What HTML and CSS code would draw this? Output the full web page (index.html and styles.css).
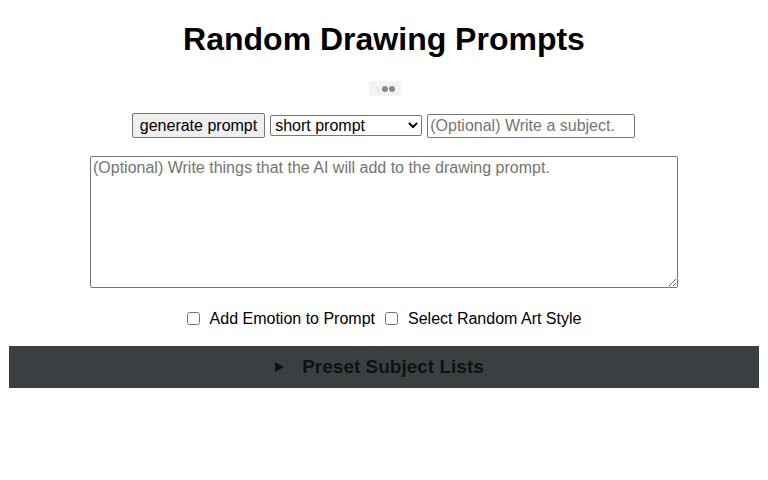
FILE: index.html
```html
<!DOCTYPE html>
<html>
<head>
<meta charset="utf-8">
<link rel="stylesheet" href="styles.css">
</head>
<body>
<h1 class="title">Random Drawing Prompts</h1>
<div class="loader-row">
  <div class="loader"><span class="dot faint"></span><span class="dot"></span><span class="dot"></span></div>
</div>
<div class="controls">
  <button class="btn">generate prompt</button>
  <select class="sel"><option>short prompt</option></select>
  <input class="subject" type="text" placeholder="(Optional) Write a subject.">
</div>
<div class="area-row">
  <textarea class="extras" placeholder="(Optional) Write things that the AI will add to the drawing prompt."></textarea>
</div>
<div class="checks">
  <label class="check"><input type="checkbox"> Add Emotion to Prompt</label>
  <label class="check"><input type="checkbox"> Select Random Art Style</label>
</div>
<details class="presets">
  <summary class="presets-sum">Preset Subject Lists</summary>
</details>
</body>
</html>
```
FILE: styles.css
```css
body {
  margin: 8px;
  font-family: "Liberation Sans", Arial, sans-serif;
  background: #fff;
  color: #000;
}
.title {
  text-align: center;
  font-size: 32px;
  margin: 13px 0 23px;
}
.loader-row {
  display: flex;
  justify-content: center;
}
.loader {
  width: 32px;
  height: 15px;
  background: #f3f3f3;
  border-radius: 3px;
  display: flex;
  align-items: center;
  justify-content: center;
  gap: 1px;
  margin-left: 2px;
}
.dot {
  width: 6px;
  height: 6px;
  border-radius: 50%;
  background: #8a8a8a;
}
.dot.faint {
  background: #ececec;
}
.controls {
  display: flex;
  justify-content: center;
  align-items: center;
  gap: 5px;
  margin-top: 17px;
  padding-right: 1px;
}
.btn {
  font: 16px "Liberation Sans", Arial, sans-serif;
  padding: 1px 7px;
  height: 25px;
  background: #efefef;
  border: 1px solid #767676;
  border-radius: 2px;
  color: #000;
}
.sel {
  font: 16px "Liberation Sans", Arial, sans-serif;
  width: 152px;
  height: 21px;
  border: 1px solid #767676;
  border-radius: 2px;
  background: #fff;
  color: #000;
}
.subject {
  font: 16px "Liberation Sans", Arial, sans-serif;
  width: 202px;
  height: 20px;
  padding: 1px 2px;
  border: 1px solid #767676;
  border-radius: 2px;
}
.area-row {
  display: flex;
  justify-content: center;
  margin-top: 18px;
}
.extras {
  font: 16px "Liberation Sans", Arial, sans-serif;
  width: 582px;
  height: 126px;
  padding: 2px;
  border: 1px solid #767676;
  border-radius: 2px;
}
.checks {
  display: flex;
  justify-content: center;
  gap: 6px;
  margin-top: 21px;
  padding-right: 4px;
  font-size: 16px;
}
.check {
  display: flex;
  align-items: center;
  gap: 7px;
}
.check input {
  margin: 3px 3px 3px 4px;
}
.presets {
  margin: 18px 1px 0;
  background: #3a4042;
}
.presets-sum {
  list-style: none;
  height: 42px;
  line-height: 42px;
  text-align: center;
  font-size: 19px;
  font-weight: bold;
  color: #111;
  cursor: pointer;
  display: flex;
  justify-content: center;
  align-items: center;
  gap: 18px;
  padding-right: 9px;
}
.presets-sum::-webkit-details-marker {
  display: none;
}
.presets-sum::before {
  content: "";
  width: 0;
  height: 0;
  border-top: 5px solid transparent;
  border-bottom: 5px solid transparent;
  border-left: 9px solid #111;
}
```
